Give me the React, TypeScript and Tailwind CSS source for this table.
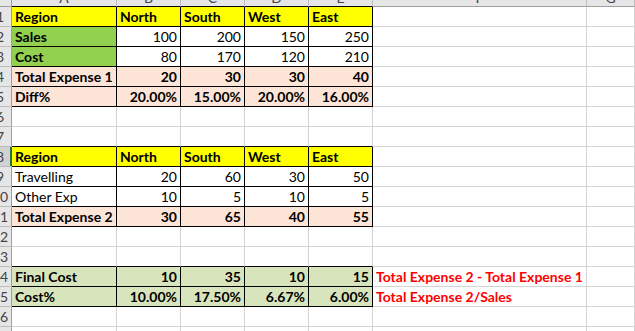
import React from "react";

type Cell = {
  t?: string;
  b?: boolean;
  r?: boolean;
  bg?: string;
  red?: boolean;
  box?: boolean;
};

const Y = "bg-[#ffff00]";
const G = "bg-[#92d050]";
const P = "bg-[#fce4d6]";
const L = "bg-[#d8e4bc]";

const hdr = (a: string, bg: string): Cell[] => [
  { t: a, b: true, bg, box: true },
  { t: "North", b: true, bg, box: true },
  { t: "South", b: true, bg, box: true },
  { t: "West", b: true, bg, box: true },
  { t: "East", b: true, bg, box: true },
];

const row = (label: string, vals: string[], bold: boolean, labelBg: string, valBg: string, labelBold = bold): Cell[] => [
  { t: label, b: labelBold, bg: labelBg, box: true },
  ...vals.map((v) => ({ t: v, b: bold, r: true, bg: valBg, box: true })),
];

const empty = (): Cell[] => [{}, {}, {}, {}, {}];

const data: Cell[][] = [
  [...hdr("Region", Y), {}, {}],
  [...row("Sales", ["100", "200", "150", "250"], false, G, "bg-white", true), {}, {}],
  [...row("Cost", ["80", "170", "120", "210"], false, G, "bg-white", true), {}, {}],
  [...row("Total Expense 1", ["20", "30", "30", "40"], true, P, P), {}, {}],
  [...row("Diff%", ["20.00%", "15.00%", "20.00%", "16.00%"], true, P, P), {}, {}],
  [...empty(), {}, {}],
  [...empty(), {}, {}],
  [...hdr("Region", Y), {}, {}],
  [...row("Travelling", ["20", "60", "30", "50"], false, "bg-white", "bg-white"), {}, {}],
  [...row("Other Exp", ["10", "5", "10", "5"], false, "bg-white", "bg-white"), {}, {}],
  [...row("Total Expense 2", ["30", "65", "40", "55"], true, P, P), {}, {}],
  [...empty(), {}, {}],
  [...empty(), {}, {}],
  [...row("Final Cost", ["10", "35", "10", "15"], true, L, L), { t: "Total Expense 2 - Total Expense 1", b: true, red: true }, {}],
  [...row("Cost%", ["10.00%", "17.50%", "6.67%", "6.00%"], true, L, L), { t: "Total Expense 2/Sales", b: true, red: true }, {}],
  [...empty(), {}, {}],
  [...empty(), {}, {}],
];

const letters = ["A", "B", "C", "D", "E", "F", "G"];

const boxed = (r: number, c: number) => !!data[r]?.[c]?.box;

export default function App() {
  const cells: React.ReactNode[] = [];
  // header row
  cells.push(
    <div key="corner" className="bg-[#e6e6e6] border-r border-b border-[#9e9e9e]" />
  );
  letters.forEach((l, c) => {
    const black = boxed(0, c);
    cells.push(
      <div
        key={"h" + l}
        className={`bg-[#e6e6e6] border-r border-b overflow-hidden ${black ? "border-b-black" : "border-b-[#9e9e9e]"} border-r-[#bdbdbd]`}
      >
        <div className="-mt-[9px] text-center text-[14px] leading-[14px] text-[#444]">{l}</div>
      </div>
    );
  });
  data.forEach((rowCells, r) => {
    const sel = r === 7;
    cells.push(
      <div
        key={"rn" + r}
        className={`relative overflow-hidden border-b border-[#bdbdbd] ${sel ? "bg-[#d2d2d2]" : "bg-[#e6e6e6]"}`}
      >
        <div className="absolute top-0 -left-[12px] w-[24px] h-full flex items-end justify-center pb-[1px] text-[14px] leading-[16px] text-[#444]">
          {r + 1}
        </div>
        <div className={`absolute top-0 right-0 h-full ${sel ? "w-[2px] bg-[#217346]" : "w-px bg-[#9e9e9e]"}`} />
      </div>
    );
    rowCells.forEach((cell, c) => {
      const rb = boxed(r, c) || boxed(r, c + 1);
      const bb = boxed(r, c) || boxed(r + 1, c);
      cells.push(
        <div
          key={r + "-" + c}
          className={`flex items-end overflow-hidden whitespace-nowrap border-r border-b pb-[1px] text-[14px] leading-[16px] ${
            rb ? "border-r-black" : "border-r-[#d4d4d4]"
          } ${bb ? "border-b-black" : "border-b-[#d4d4d4]"} ${cell.bg ?? "bg-white"} ${
            cell.r ? "justify-end pr-[3px]" : "justify-start pl-[3px]"
          } ${cell.b ? "font-bold" : "font-normal"} ${cell.red ? "text-[#ff0000]" : "text-black"}`}
        >
          {cell.t ?? ""}
        </div>
      );
    });
  });

  return (
    <div
      className="w-[635px] h-[331px] overflow-hidden bg-white"
      style={{ fontFamily: "Lato, 'Liberation Sans', sans-serif" }}
    >
      <div className="grid grid-cols-[12px_105px_64px_64px_64px_64px_214px_48px] grid-rows-[7px_repeat(17,20px)]">
        {cells}
      </div>
    </div>
  );
}
